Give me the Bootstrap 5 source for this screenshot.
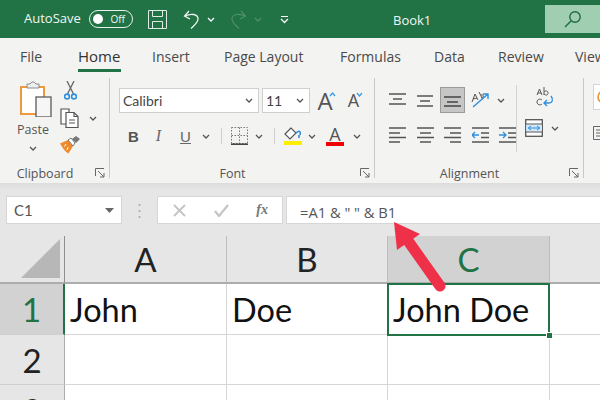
<!DOCTYPE html>
<html lang="en">
<head>
<meta charset="utf-8">
<title>Book1 - Excel</title>
<link href="https://cdn.jsdelivr.net/npm/bootstrap@5.3.0/dist/css/bootstrap.min.css" rel="stylesheet">
<style>
html,body{margin:0;background:#fff}
body{font-family:"Open Sans","Liberation Sans",sans-serif;color:#444}
.app{width:600px;height:400px;overflow:hidden;position:relative}
svg{display:block;flex:none}
.tc{display:flex;align-items:center;justify-content:center;flex:none}
.titlebar{height:38px;background:#217346;color:#f2f7f4;font-size:13px;padding-left:24px}
.autosave{width:65px}
.toggle{width:44px;height:18px;border:1.5px solid #e8f1ec;border-radius:9px;padding:0 3px;font-size:10px;line-height:1}
.knob{width:10px;height:10px;border-radius:50%;background:#fff}
.tb-save{margin-left:15px}.tb-undo{margin-left:16px}.tb-ch1{margin-left:7px}.tb-redo{margin-left:15px}.tb-ch2{margin-left:7px}.tb-cust{margin-left:18px}
.doc{position:absolute;left:393px;top:11px;font-size:13px;line-height:18px}
.searchbox{position:absolute;left:545px;top:5px;width:55px;height:28px;background:#9fceb1}
.tabs{height:37px;background:#f3f3f2;font-size:14px;color:#4a4a4a;position:relative;padding-left:20px}
.tabs span{line-height:37px;flex:none}
.tab-file{width:58px}.tab-home{width:74px;position:relative;font-size:15px;font-weight:500;color:#333}.tab-insert{width:72px}.tab-page{width:116px}.tab-form{width:94px}.tab-data{width:64px}.tab-rev{width:77px}
.tab-home::after{content:"";position:absolute;left:0;width:43px;top:31px;height:3px;background:#217346}
.ribbon{height:108px;background:#f3f3f2;position:relative}
.rgroup{height:100px;position:relative;flex:none;border-right:1px solid #c9c9c9;margin-top:3px}
.g-clip{width:110px}.g-font{width:265px}.g-align{width:209px}
.rlabel{position:absolute;left:0;right:19px;top:87px;text-align:center;font-size:12.5px;line-height:18px;color:#555}
.launch{position:absolute;right:4px;top:90px}
.paste-col{width:46px;margin-left:10px;padding-top:3px;font-size:12.5px;line-height:16px;color:#555}
.paste-col div{margin-top:5px}
.small-col{padding-top:3px;margin-left:4px}
.fontsel{height:25px;background:#fff;border:1px solid #cfcfcf;font-family:Lato,"Liberation Sans",sans-serif;font-size:14px;color:#444;padding:0 5px 0 3px}
.f-name{width:140px}.f-size{width:48px;margin-left:3px}
.row-a{padding:10px 0 0 9px}
.row-b{margin:13px 0 0 12px;height:20px}
.grow{font-size:24px;line-height:25px;color:#555}
.shrink{font-size:18px;line-height:25px;color:#555}
.wd-14{width:14px}.wd-16{width:16px}.wd-17{width:17px}.wd-21{width:21px}.wd-23{width:23px}.wd-27{width:27px}.wd-28{width:28px}.wd-30{width:30px}
.bb{font:bold 15px "Liberation Sans",sans-serif;color:#555}
.bi{font:italic 16px "Liberation Serif",serif;color:#666}
.bu{font:15px "Liberation Sans",sans-serif;color:#666;text-decoration:underline}
.vsep{width:1px;height:16px;background:#cfcfcf}
.colorA{font-size:18px;line-height:14px;color:#555;text-align:center}
.bar{height:4px;width:18px}
.bar-y{background:#ffee00}.bar-r{background:#f00000;margin-top:1px}
.al-left{width:141px;padding:9px 0 0 9px}
.al-cell{width:27.5px;height:26px}
.al-active{width:25px;height:26px;background:#c6c6c6;border:1px solid #9a9a9a;margin-left:1px;margin-right:1.5px}
.al-row2{margin-top:9px}
.al-sep{width:1px;height:67px;background:#d3d3d3;margin-top:7px}
.al-right{padding:9px 0 0 8px}
.wrapicon{padding-left:11px}
.nextgrp{padding:9px 0 0 9px}
.fmtbox{width:40px;height:26px;background:#fff;border:1px solid #d4d4d4;padding:4px 0 0 2px}
.shade{height:7px;background:linear-gradient(#dcdcdc,#e6e6e6)}
.fbar{height:46px;background:#e6e6e6;padding:6px 0 0 6px}
.namebox{width:116px;height:28px;background:#fff;border:1px solid #d6d6d6;font-family:Lato,"Liberation Sans",sans-serif;font-size:15px;padding:0 7px 0 7px;color:#555}
.grip{width:35px}
.fbtns{width:126px;height:28px;background:#fff;border:1px solid #d6d6d6;padding:0 14px 0 15px}
.fx{font:italic bold 14px "Liberation Serif",serif;color:#777}
.formula{flex:1;height:28px;margin-left:3px;background:#fff;border:1px solid #d6d6d6;border-right:0;font-size:14.7px;color:#555;padding-left:13px;line-height:30px;white-space:nowrap}
.sheet{display:grid;grid-template-columns:65px 162px 161px 162px 1fr;grid-template-rows:48px 51px 50px 51px;font-family:Lato,"Liberation Sans",sans-serif;color:#111;position:relative}
.ch{background:#e6e6e6;border-bottom:2px solid #adadad;border-right:1px solid #bdbdbd;font-size:33px;line-height:46px;text-align:center;color:#222}
.ch-corner{border-right:1px solid #8f8f8f;position:relative}
.ch-sel{background:#d2d2d2;color:#217346}
.rh{background:#e6e6e6;border-bottom:1px solid #cfcfcf;border-right:1px solid #adadad;font-size:33px;line-height:50px;text-align:center;color:#222}
.rh-sel{background:#d2d2d2;color:#217346;border-right:2px solid #217346}
.ce{border-right:1px solid #d6d6d6;border-bottom:1px solid #d6d6d6;font-size:32.5px;line-height:52px;padding-left:5px;white-space:nowrap}
.ce-sel{position:relative;z-index:1;margin:-1px 0 -1px -1px;border:2px solid #217346;line-height:50px;padding-left:4px}
.handle{position:absolute;right:-5px;bottom:-5px;width:7px;height:7px;background:#217346;border:1px solid #fff}
.arrow{position:absolute;left:0;top:0;z-index:2;pointer-events:none}
</style>
</head>
<body>
<svg width="0" height="0" class="position-absolute">
  <symbol id="chev" viewBox="0 0 8 5"><path d="M1 1l3 3 3-3" fill="none" stroke="#555" stroke-width="1.3"/></symbol>
  <symbol id="launch" viewBox="0 0 10 10"><path d="M.5 8V.5H9" fill="none" stroke="#666"/><path d="M3 3l6 6M9 5v4H5" fill="none" stroke="#666"/></symbol>
</svg>
<div class="app">
  <div class="titlebar d-flex align-items-center position-relative">
    <span class="autosave">AutoSave</span>
    <span class="toggle d-flex align-items-center justify-content-between"><span class="knob"></span><span class="pe-1">Off</span></span>
    <svg class="tb-save" width="19" height="19" viewBox="0 0 19 19" fill="none" stroke="#dfece5" stroke-width="1"><path d="M.5.5h18v18H.5z"/><path d="M4.5 .5v6h10v-6M4.5 18.5v-7h10v7"/></svg>
    <svg class="tb-undo" width="17" height="19" viewBox="0 0 17 19" fill="none" stroke="#eef5f1" stroke-width="1.3"><path d="M6 1L1.5 6 7 9"/><path d="M2 6c6-3 13-2 13 3 0 3-3 6-7 9.500"/></svg>
    <svg class="tb-ch1" width="8" height="5"><path d="M1 1l3 3 3-3" fill="none" stroke="#fff" stroke-width="1.3"/></svg>
    <svg class="tb-redo" width="17" height="19" viewBox="0 0 17 19" fill="none" stroke="#4f8f6b" stroke-width="1.2"><path d="M11 1l4.500 5L10 9"/><path d="M15 6C9 3 2 4 2 9c0 3 3 6 7 9.500"/></svg>
    <svg class="tb-ch2" width="8" height="5"><path d="M1 1l3 3 3-3" fill="none" stroke="#4f8f6b" stroke-width="1.3"/></svg>
    <svg class="tb-cust" width="9" height="9" viewBox="0 0 9 9" fill="none" stroke="#fff"><path d="M1 1.500h7"/><path d="M1 4l3.500 3.500L8 4" stroke-width="1.3"/></svg>
    <span class="doc">Book1</span>
    <div class="searchbox tc"><svg width="18" height="18" viewBox="0 0 18 18" fill="none" stroke="#1f6b42" stroke-width="1.4"><circle cx="11" cy="7" r="5.200"/><path d="M7 11l-6 6"/></svg></div>
  </div>

  <div class="tabs d-flex">
    <span class="tab-file">File</span><span class="tab-home">Home</span><span class="tab-insert">Insert</span><span class="tab-page">Page Layout</span><span class="tab-form">Formulas</span><span class="tab-data">Data</span><span class="tab-rev">Review</span><span>View</span>
  </div>

  <div class="ribbon d-flex">
    <!-- Clipboard -->
    <div class="rgroup g-clip d-flex">
      <div class="paste-col d-flex flex-column align-items-center">
        <svg class="align-self-end me-1" width="34" height="36" viewBox="0 0 34 36" fill="none">
          <rect x="3" y="6" width="23" height="27" fill="#fff" stroke="#ee9a3c" stroke-width="2"/>
          <path d="M9 6V3h3l2-2h2l2 2h3v4H9z" fill="#eee" stroke="#8a8a8a"/>
          <rect x="18" y="16" width="15" height="20" fill="#f6f6f6" stroke="#666" stroke-width="1.400"/>
        </svg>
        <div>Paste</div>
        <svg class="mt-2" width="8" height="5"><use href="#chev"/></svg>
      </div>
      <div class="small-col d-flex flex-column align-items-start">
        <svg class="ms-1" width="13" height="19" viewBox="0 0 13 19" fill="none"><path d="M3 0l6.500 13M10 0L3.500 13" stroke="#666" stroke-width="1.300"/><circle cx="3" cy="15.500" r="2.400" stroke="#2f8fdc" stroke-width="1.600"/><circle cx="10" cy="15.500" r="2.400" stroke="#2f8fdc" stroke-width="1.600"/></svg>
        <div class="d-flex align-items-center mt-2">
          <svg width="21" height="20" viewBox="0 0 21 20" fill="none" stroke="#555" stroke-width="1.200"><path d="M1 1h8v15H1z" fill="#fff"/><path d="M6 4.500h8l4 4v11H6z" fill="#fff"/><path d="M14 4.500v4h4M9 12h6M9 15h6"/></svg>
          <svg class="ms-2" width="8" height="5"><use href="#chev"/></svg>
        </div>
        <svg class="mt-2" width="20" height="18" viewBox="0 0 20 18"><path d="M0 7.500l8-3.500 5 6-4.500 7.500C5 16 2 11 0 7.500z" fill="#ee8a2c"/><path d="M8 4l3-2 4 5-2 3z" fill="#fff" stroke="#777"/><path d="M12 3l4-3 4 3-4 4z" fill="#777"/><path d="M6 8l-1.500 2.500M8 11l-1 3" stroke="#fff" fill="none"/></svg>
      </div>
      <div class="rlabel">Clipboard</div>
      <svg class="launch" width="10" height="10"><use href="#launch"/></svg>
    </div>

    <!-- Font -->
    <div class="rgroup g-font">
      <div class="row-a d-flex">
        <div class="fontsel f-name d-flex align-items-center justify-content-between"><span>Calibri</span><svg width="8" height="5"><use href="#chev"/></svg></div>
        <div class="fontsel f-size d-flex align-items-center justify-content-between"><span>11</span><svg width="8" height="5"><use href="#chev"/></svg></div>
        <div class="tc wd-30 position-relative grow">A<svg class="position-absolute top-0 end-0 mt-1 me-1" width="7" height="5" viewBox="0 0 7 5"><path d="M1 4l2.500-3L6 4" fill="none" stroke="#3d9be0" stroke-width="1.300"/></svg></div>
        <div class="tc wd-27 position-relative shrink">A<svg class="position-absolute top-0 end-0 mt-1 me-1" width="7" height="5" viewBox="0 0 7 5"><path d="M1 1l2.500 3L6 1" fill="none" stroke="#3d9be0" stroke-width="1.300"/></svg></div>
      </div>
      <div class="row-b d-flex align-items-center">
        <span class="tc wd-23 bb">B</span><span class="tc wd-27 bi">I</span><span class="tc wd-27 bu">U</span>
        <span class="tc wd-14"><svg width="8" height="5"><use href="#chev"/></svg></span>
        <span class="tc wd-16"><span class="vsep"></span></span>
        <span class="tc wd-21"><svg width="17" height="18" viewBox="0 0 17 18" fill="none"><path d="M.5.5h16v16H.5zM8.500.5v16M.5 8.500h16" stroke="#777" stroke-dasharray="1.500 1.500"/><path d="M0 17.200h17" stroke="#333" stroke-width="1.400"/></svg></span>
        <span class="tc wd-17"><svg width="8" height="5"><use href="#chev"/></svg></span>
        <span class="tc wd-14"><span class="vsep"></span></span>
        <span class="tc wd-23 flex-column"><svg width="18" height="14" viewBox="0 0 18 14" fill="none"><path d="M7 1L1 7l5 5 6-6z" stroke="#555" stroke-width="1.200" fill="#fff"/><path d="M12 6c3-3 5-2 4 2" stroke="#2f8fdc" stroke-width="1.600"/><path d="M15 8v3" stroke="#2f8fdc" stroke-width="1.600"/></svg><span class="bar bar-y"></span></span>
        <span class="tc wd-16"><svg width="8" height="5"><use href="#chev"/></svg></span>
        <span class="tc wd-30 flex-column colorA"><span>A</span><span class="bar bar-r"></span></span>
        <span class="tc wd-14"><svg width="8" height="5"><use href="#chev"/></svg></span>
      </div>
      <div class="rlabel">Font</div>
      <svg class="launch" width="10" height="10"><use href="#launch"/></svg>
    </div>

    <!-- Alignment -->
    <div class="rgroup g-align d-flex">
      <div class="al-left">
        <div class="d-flex">
          <span class="tc al-cell"><svg width="17" height="14" viewBox="0 0 17 14" stroke="#555" stroke-width="1.300"><path d="M0 1h17M4 6h9M0 11h17"/></svg></span>
          <span class="tc al-cell"><svg width="16" height="14" viewBox="0 0 16 14" stroke="#555" stroke-width="1.300"><path d="M0 3h16M3 8h10M0 13h16"/></svg></span>
          <span class="tc al-active"><svg width="17" height="14" viewBox="0 0 17 14" stroke="#444" stroke-width="1.300"><path d="M0 4h17M3 9h11M0 13h17"/></svg></span>
          <span class="tc al-cell"><svg width="19" height="16" viewBox="0 0 19 16" fill="none"><path d="M2 15L17 2M12 2h5v5" stroke="#2f8fdc" stroke-width="1.400"/><path d="M1 10l3-8 3 6M2 7l4-1M8 0l3 6M10 3c2-1 3 1 2 2s-2 1-2 1" stroke="#555" stroke-width="1"/></svg></span>
          <span class="tc wd-14"><svg width="8" height="5"><use href="#chev"/></svg></span>
        </div>
        <div class="d-flex al-row2">
          <span class="tc al-cell"><svg width="17" height="16" viewBox="0 0 17 16" stroke="#555" stroke-width="1.300"><path d="M0 1h17M0 6h11M0 10.500h17M0 15h11"/></svg></span>
          <span class="tc al-cell"><svg width="17" height="16" viewBox="0 0 17 16" stroke="#555" stroke-width="1.300"><path d="M0 1h17M3 6h11M0 10.500h17M3 15h11"/></svg></span>
          <span class="tc al-cell"><svg width="17" height="16" viewBox="0 0 17 16" stroke="#555" stroke-width="1.300"><path d="M0 1h17M6 6h11M0 10.500h17M6 15h11"/></svg></span>
          <span class="tc al-cell"><svg width="17" height="16" viewBox="0 0 17 16" fill="none" stroke="#555" stroke-width="1.300"><path d="M0 1h17M9 6h8M9 10.500h8M0 15h17"/><path d="M0 8h7M3 5L0 8l3 3" stroke="#2f8fdc"/></svg></span>
          <span class="tc al-cell"><svg width="17" height="16" viewBox="0 0 17 16" fill="none" stroke="#555" stroke-width="1.300"><path d="M0 1h17M9 6h8M9 10.500h8M0 15h17"/><path d="M0 8h7M4 5l3 3-3 3" stroke="#2f8fdc"/></svg></span>
        </div>
      </div>
      <span class="al-sep"></span>
      <div class="al-right">
        <div class="wrapicon"><svg width="18" height="20" viewBox="0 0 18 20" fill="none" stroke="#555" stroke-width="1"><path d="M1 8l2.500-6L6 8M1.800 6h3.400M8 0v8M8 5c2-2 4-1 4 1s-2 3-4 1M6 13c-1.500-1.500-5-1-5 2s3.500 3.500 5 2"/><path d="M15 9c3 4 1 7-2 7H8M11 13l-3 3 3 3" stroke="#2f8fdc" stroke-width="1.400"/></svg></div>
        <div class="d-flex align-items-center mt-2 pt-1">
          <svg width="18" height="18" viewBox="0 0 18 18" fill="none"><rect x=".7" y=".7" width="16.600" height="16.600" fill="#fff" stroke="#555" stroke-width="1.300"/><path d="M1 5.500h16v7H1z" fill="#cfe6f7"/><path d="M1 5h16M1 13h16" stroke="#555"/><path d="M3 9h12M6 7L3.500 9 6 11M12 7l2.500 2-2.500 2" stroke="#2f8fdc"/></svg>
          <svg class="ms-2" width="8" height="5"><use href="#chev"/></svg>
        </div>
      </div>
      <div class="rlabel">Alignment</div>
      <svg class="launch" width="10" height="10"><use href="#launch"/></svg>
    </div>

    <!-- Next group, cut off by the window -->
    <div class="nextgrp">
      <div class="fmtbox"><svg width="12" height="16" viewBox="0 0 12 16" fill="none"><circle cx="8" cy="8" r="6" stroke="#e8923a" stroke-width="1.600"/></svg></div>
      <svg class="mt-3" width="12" height="14" viewBox="0 0 12 14" fill="none" stroke="#666"><path d="M.5.500h11v13H.5zM3 4h6M3 7h6M3 10h6"/></svg>
    </div>
  </div>

  <div class="shade"></div>

  <div class="fbar d-flex">
    <div class="namebox d-flex align-items-center justify-content-between"><span>C1</span><svg width="9" height="5" viewBox="0 0 9 5"><path d="M0 0h9L4.500 5z" fill="#666"/></svg></div>
    <div class="grip tc align-self-start pt-1"><svg width="3" height="20" viewBox="0 0 3 20" fill="#aaa"><circle cx="1.500" cy="5" r="1.100"/><circle cx="1.500" cy="11" r="1.100"/><circle cx="1.500" cy="17" r="1.100"/></svg></div>
    <div class="fbtns d-flex align-items-center justify-content-between">
      <svg width="13" height="13" viewBox="0 0 13 13" stroke="#c4c4c4" stroke-width="1.800"><path d="M1 1l11 11M12 1L1 12"/></svg>
      <svg width="15" height="13" viewBox="0 0 15 13" fill="none" stroke="#c4c4c4" stroke-width="2.200"><path d="M1 7l4 5L14 1"/></svg>
      <span class="fx">fx</span>
    </div>
    <div class="formula">=A1 &amp; " " &amp; B1</div>
  </div>

  <div class="sheet">
    <div class="ch ch-corner"><svg class="position-absolute bottom-0 end-0 mb-1 me-1" width="39" height="39" viewBox="0 0 39 39"><path d="M39 0v39H0z" fill="#b7b7b7"/></svg></div>
    <div class="ch">A</div><div class="ch">B</div><div class="ch ch-sel">C</div><div class="ch border-end-0"></div>
    <div class="rh rh-sel">1</div><div class="ce">John</div><div class="ce">Doe</div>
    <div class="ce ce-sel">John Doe<span class="handle"></span></div><div class="ce border-end-0"></div>
    <div class="rh">2</div><div class="ce"></div><div class="ce"></div><div class="ce"></div><div class="ce border-end-0"></div>
    <div class="rh">3</div><div class="ce"></div><div class="ce"></div><div class="ce"></div><div class="ce border-end-0"></div>
  </div>

  <svg class="arrow" width="600" height="400" viewBox="0 0 600 400"><path d="M394 222l26 12-23 16z" fill="#ee3049"/><path d="M406 238l34 48" stroke="#ee3049" stroke-width="11" stroke-linecap="round" fill="none"/></svg>
</div>
<script src="https://cdn.jsdelivr.net/npm/bootstrap@5.3.0/dist/js/bootstrap.bundle.min.js"></script>
</body>
</html>
